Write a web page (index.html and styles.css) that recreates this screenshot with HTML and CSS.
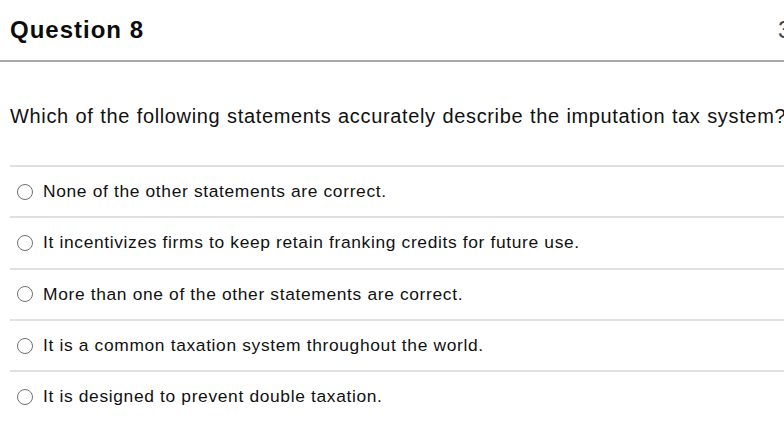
FILE: index.html
```html
<!doctype html>
<html>
  <head>
    <title>Question 8</title>
    <meta name="viewport" content="width=device-width">
    <link rel="stylesheet" href="styles.css">
  </head>
  <body>
    <div id="quiz">
      <div class="header">
        <h2 class="title">Question 8</h2>
        <span class="points">3 pts</span>
      </div>
      <div class="question">
        Which of the following statements accurately describe the imputation tax system?
      </div>
      <ul class="answers">
        <li><span class="radio"></span>None of the other statements are correct.</li>
        <li><span class="radio"></span>It incentivizes firms to keep retain franking credits for future use.</li>
        <li><span class="radio"></span>More than one of the other statements are correct.</li>
        <li><span class="radio"></span>It is a common taxation system throughout the world.</li>
        <li><span class="radio"></span>It is designed to prevent double taxation.</li>
      </ul>
    </div>
  </body>
</html>
```

FILE: styles.css
```css
html, body {
  margin: 0;
  padding: 0;
  background: #fff;
  overflow: hidden;
}
body {
  font-family: "Liberation Sans", Arial, sans-serif;
  color: #111;
}
#quiz {
  width: 880px;
}
.header {
  height: 62px;
  border-bottom: 2px solid #a9a9a9;
  display: flex;
  align-items: center;
  justify-content: space-between;
  box-sizing: border-box;
  padding: 1px 0 1px 10px;
}
.title {
  margin: 0;
  font-size: 24px;
  font-weight: bold;
  letter-spacing: 1px;
  color: #0c0c0c;
}
.points {
  font-size: 24px;
  color: #444;
  width: 102px;
}
.question {
  font-size: 20px;
  letter-spacing: 0.65px;
  word-spacing: 0.5px;
  padding: 0 10px;
  height: 103px;
  line-height: 108px;
  white-space: nowrap;
  box-sizing: border-box;
}
.answers {
  margin: 0 0 0 10px;
  padding: 0;
  list-style-type: none;
}
.answers li {
  border-top: 2px solid #e0e0e0;
  height: 51.3px;
  box-sizing: border-box;
  display: flex;
  align-items: center;
  font-size: 17.4px;
  letter-spacing: 0.65px;
  color: #111;
  white-space: nowrap;
}
.radio {
  width: 16px;
  height: 16px;
  box-sizing: border-box;
  border: 1.3px solid #707070;
  border-radius: 50%;
  margin: 0 10px 0 7px;
  flex: none;
}
```
